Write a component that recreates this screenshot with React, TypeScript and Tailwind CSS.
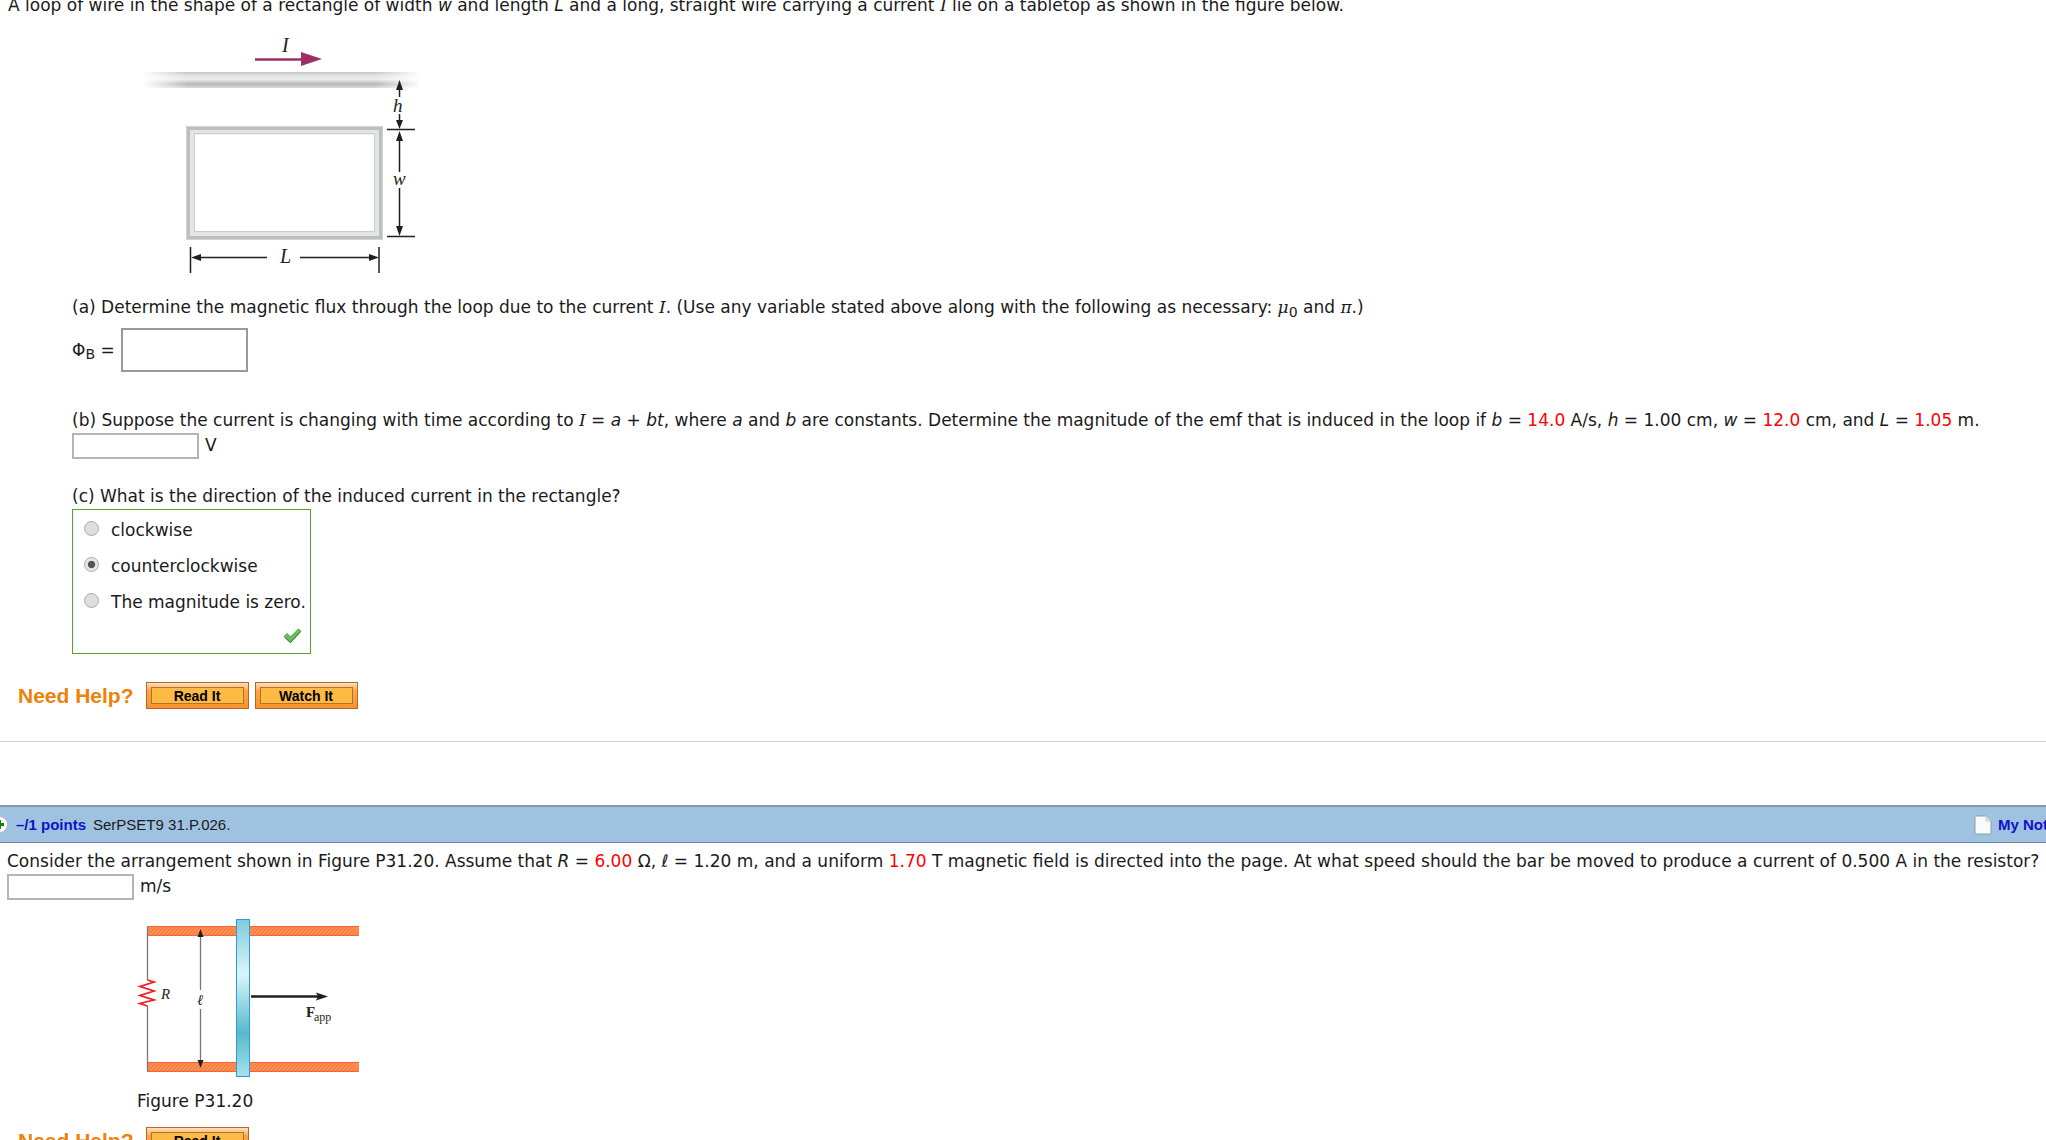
import { useState } from 'react';
import type { ReactNode } from 'react';

const directions = ['clockwise', 'counterclockwise', 'The magnitude is zero.'];

// Randomized values are shown in red
function Value({ children }: { children: ReactNode }) {
  return <span className="text-[#ff0000]">{children}</span>;
}

function Serif({ children }: { children: ReactNode }) {
  return <i className="font-['DejaVu_Serif',serif]">{children}</i>;
}

function AnswerInput({ id, label, unit }: { id: string; label: string; unit: string }) {
  return (
    <div className="flex h-[25px] items-center gap-[6px]">
      <input
        id={id}
        type="text"
        aria-label={label}
        className="h-[26px] w-[127px] border-2 border-[#b4b4b4] bg-white px-1"
      />
      <label htmlFor={id}>{unit}</label>
    </div>
  );
}

function HelpButton({ children }: { children: ReactNode }) {
  return (
    <button
      type="button"
      className="h-[27px] w-[103px] border border-[#b5662a] bg-linear-to-b from-[#fde0c0] via-[#fba848] via-30% to-[#f9922c] p-1"
    >
      <span className="flex h-full items-center justify-center border border-[#b5732a] bg-[#fdba45] text-sm font-bold text-black">
        {children}
      </span>
    </button>
  );
}

function NeedHelp({ children }: { children: ReactNode }) {
  return (
    <div className="flex items-center gap-[6px] pl-[18px] font-['Liberation_Sans',Arial,sans-serif]">
      <span className="mr-[6px] text-[21px] leading-6 font-bold text-[#ee8108]">Need Help?</span>
      {children}
    </div>
  );
}

function CheckMark() {
  return (
    <svg width="19" height="16" viewBox="0 0 19 16" role="img" aria-label="Correct">
      <path d="M1 8.5 4 5.5 7.5 9 15.5 1 18 3.2 7.5 14.8Z" fill="#6cbf60" stroke="#4b9a45" strokeLinejoin="round" />
      <path d="M2 9.5 7.5 14.5 17 4" fill="none" stroke="#3c8339" strokeWidth="1" />
    </svg>
  );
}

function LoopFigure() {
  return (
    <svg
      width="280"
      height="242"
      viewBox="142 36 280 242"
      className="font-['Liberation_Serif',serif] italic"
      role="img"
      aria-label="Rectangular loop below a long straight wire"
    >
      <defs>
        <linearGradient id="wire" x1="0" y1="0" x2="0" y2="1">
          <stop offset="0" stopColor="#c4c6c8" />
          <stop offset="0.2" stopColor="#dedfe0" />
          <stop offset="0.45" stopColor="#eeeeef" />
          <stop offset="0.75" stopColor="#b5b7b9" />
          <stop offset="1" stopColor="#dcddde" />
        </linearGradient>
        <linearGradient id="fade" x1="0" y1="0" x2="1" y2="0">
          <stop offset="0" stopColor="#fff" />
          <stop offset="0.16" stopColor="#fff" stopOpacity="0" />
          <stop offset="0.84" stopColor="#fff" stopOpacity="0" />
          <stop offset="1" stopColor="#fff" />
        </linearGradient>
      </defs>
      <rect x="144" y="72" width="276" height="16" fill="url(#wire)" />
      <rect x="143" y="71" width="278" height="18" fill="url(#fade)" />
      <path d="M255 59.5H303" stroke="#9c3065" strokeWidth="2.6" />
      <path d="M301 52 322 59 301 66Z" fill="#9c3065" />
      <rect x="191" y="130.5" width="187" height="105" fill="none" stroke="#e3e4e6" strokeWidth="8" />
      <rect x="188.5" y="128.5" width="192" height="109" fill="none" stroke="#bcbec1" strokeWidth="3" />
      <rect x="186.5" y="126.5" width="196" height="113" fill="none" stroke="#d2d3d5" />
      <rect x="194.5" y="133.5" width="180" height="98" fill="none" stroke="#c9cbcd" />
      <g stroke="#231f20" strokeWidth="1.5" fill="none">
        <path d="M399.5 86V97M399.5 114V122M387 129.5H415M399.5 138V172M399.5 188V228M387 236.5H415" />
        <path d="M190.5 247V273M379 247V273M198 257.5H267M300 257.5H371" />
      </g>
      <g fill="#231f20">
        <path d="M399.5 80 403 90H396ZM399.5 129 396 120H403ZM399.5 131 403 141H396ZM399.5 236 396 226H403Z" />
        <path d="M191 257.5 201 254V261ZM379 257.5 369 254V261Z" />
        <text x="282" y="52" fontSize="20">I</text>
        <text x="393" y="112" fontSize="19">h</text>
        <text x="393" y="185" fontSize="19">w</text>
        <text x="280" y="263" fontSize="20">L</text>
      </g>
    </svg>
  );
}

function RailFigure() {
  return (
    <svg
      width="224"
      height="164"
      viewBox="137 916 224 164"
      className="font-['Liberation_Serif',serif]"
      role="img"
      aria-label="Bar sliding on two rails joined by a resistor"
    >
      <defs>
        <linearGradient id="bar" x1="0" y1="0" x2="0" y2="1">
          <stop offset="0" stopColor="#7fcbdc" />
          <stop offset="0.35" stopColor="#d8f6fb" />
          <stop offset="0.72" stopColor="#58b9c9" />
          <stop offset="1" stopColor="#a6e2ec" />
        </linearGradient>
        <pattern id="grain" width="4" height="4" patternUnits="userSpaceOnUse">
          <rect width="4" height="4" fill="#fd8145" />
          <path d="M0 4 4 0" stroke="#ffa069" />
        </pattern>
      </defs>
      <g fill="url(#grain)">
        <rect x="147" y="925" width="212" height="10" />
        <rect x="147" y="1061" width="212" height="10" />
      </g>
      <path d="M147 925.5H359M147 934.5H359M147 1061.5H359M147 1070.5H359" stroke="#f4662e" />
      <path d="M147.5 926V979M147.5 1005V1070" stroke="#77777a" strokeWidth="1.3" />
      <path
        d="M147.5 979 154 981 140 985.5 154 990 140 994.5 154 999 140 1002.5 147.5 1005"
        fill="none"
        stroke="#ee1c24"
        strokeWidth="1.8"
      />
      <path d="M200.5 936V989M200.5 1008V1059" stroke="#77777a" strokeWidth="1.3" />
      <path d="M200.5 928 203.5 936H197.5ZM200.5 1067 197.5 1059H203.5Z" fill="#231f20" />
      <rect x="236.5" y="918.5" width="13" height="157" fill="url(#bar)" stroke="#2f9bdc" />
      <path d="M251 995.5H318" stroke="#231f20" strokeWidth="2.4" />
      <path d="M328 995.5 316 991.5 318 995.5 316 999.5Z" fill="#231f20" />
      <g fill="#231f20">
        <text x="161" y="998" fontSize="15" fontStyle="italic">R</text>
        <text x="197" y="1004" fontSize="15" fontStyle="italic">ℓ</text>
        <text x="306" y="1016" fontSize="15" fontWeight="bold">F</text>
        <text x="314" y="1020" fontSize="12">app</text>
      </g>
    </svg>
  );
}

export default function App() {
  const [direction, setDirection] = useState('counterclockwise');

  return (
    <div className="h-screen overflow-hidden bg-white font-['Verdana','DejaVu_Sans',sans-serif] text-[17px] leading-[25px] whitespace-nowrap text-[#1a1a1a]">
      <main className="-mt-[7px]">
        <section>
          <p className="pl-2">
            A loop of wire in the shape of a rectangle of width <i>w</i> and length <i>L</i> and a long, straight wire
            carrying a current <Serif>I</Serif> lie on a tabletop as shown in the figure below.
          </p>
          <div className="mt-[18px] flex pl-[142px]">
            <LoopFigure />
          </div>

          <div className="mt-[17px] pl-[72px]">
            <p>
              (a) Determine the magnetic flux through the loop due to the current <Serif>I</Serif>. (Use any variable
              stated above along with the following as necessary: <Serif>μ</Serif>
              <sub className="text-sm leading-none">0</sub> and <Serif>π</Serif>.)
            </p>
            <div className="mt-2 flex items-center gap-[6px]">
              <label htmlFor="flux">
                Φ<sub className="text-sm leading-none">B</sub> =
              </label>
              <input id="flux" type="text" className="h-11 w-[127px] border-2 border-[#999] bg-white px-1" />
            </div>

            <p className="mt-9">
              (b) Suppose the current is changing with time according to <Serif>I</Serif> = <i>a</i> + <i>bt</i>, where{' '}
              <i>a</i> and <i>b</i> are constants. Determine the magnitude of the emf that is induced in the loop if{' '}
              <i>b</i> = <Value>14.0</Value> A/s, <i>h</i> = 1.00 cm, <i>w</i> = <Value>12.0</Value> cm, and <i>L</i> ={' '}
              <Value>1.05</Value> m.
            </p>
            <AnswerInput id="emf" label="Induced emf" unit="V" />

            <p className="mt-[26px]">(c) What is the direction of the induced current in the rectangle?</p>
            <fieldset
              aria-label="Direction of the induced current"
              className="flex h-[145px] w-[239px] min-w-0 flex-col border border-[#5aa02c] pt-2 pr-2 pl-[11px]"
            >
              {directions.map((name) => (
                <label key={name} className="flex h-9 items-start gap-3">
                  <input
                    type="radio"
                    name="direction"
                    checked={direction === name}
                    onChange={() => setDirection(name)}
                    className="mt-[3px] size-[15px] shrink-0 appearance-none rounded-full border border-[#adadad] bg-[#dedede] checked:bg-radial checked:from-[#555] checked:from-35% checked:to-[#e6e6e6] checked:to-45%"
                  />
                  {name}
                </label>
              ))}
              <span className="mt-[2px] self-end">
                <CheckMark />
              </span>
            </fieldset>
          </div>

          <div className="mt-[28px]">
            <NeedHelp>
              <HelpButton>Read It</HelpButton>
              <HelpButton>Watch It</HelpButton>
            </NeedHelp>
          </div>
        </section>

        <hr className="mt-8 border-[#ccc]" />

        <section className="mt-[63px]">
          <header className="flex h-[38px] items-center border-t-2 border-b border-t-[#7f9bb0] border-b-[#6c86a0] bg-[#9fc2e0] font-['Liberation_Sans',Arial,sans-serif] text-[15px]">
            <button
              type="button"
              aria-label="Expand question"
              className="-ml-[9px] flex size-[17px] items-center justify-center rounded-full border border-[#b8b8b8] bg-white"
            >
              <svg width="9" height="9" viewBox="0 0 9 9">
                <path d="M4.5 0V9M0 4.5H9" stroke="#0a8a0a" strokeWidth="3" />
              </svg>
            </button>
            <a href="#points" className="ml-2 font-bold text-[#1111cc]">
              –/1 points
            </a>
            <span className="ml-[7px]">SerPSET9 31.P.026.</span>
            <a href="#notes" className="ml-auto flex w-[72px] items-center gap-[6px] font-bold text-[#1111cc]">
              <svg width="18" height="20" viewBox="0 0 18 20" className="shrink-0">
                <path d="M1 1H12L17 6V19H1Z" fill="#fafafa" stroke="#8b9fb0" strokeLinejoin="round" />
                <path d="M12 1V6H17" fill="#e4e4e4" stroke="#c3cad0" />
              </svg>
              My Notes
            </a>
          </header>

          <div className="mt-[6px] pl-[7px]">
            <p>
              Consider the arrangement shown in Figure P31.20. Assume that <i>R</i> = <Value>6.00</Value> Ω, <i>ℓ</i> =
              1.20 m, and a uniform <Value>1.70</Value> T magnetic field is directed into the page. At what speed should
              the bar be moved to produce a current of 0.500 A in the resistor?
            </p>
            <AnswerInput id="speed" label="Speed of the bar" unit="m/s" />
          </div>

          <figure className="mt-[18px] pl-[137px]">
            <RailFigure />
            <figcaption className="mt-2">Figure P31.20</figcaption>
          </figure>

          <div className="mt-[13px]">
            <NeedHelp>
              <HelpButton>Read It</HelpButton>
            </NeedHelp>
          </div>
        </section>
      </main>
    </div>
  );
}
